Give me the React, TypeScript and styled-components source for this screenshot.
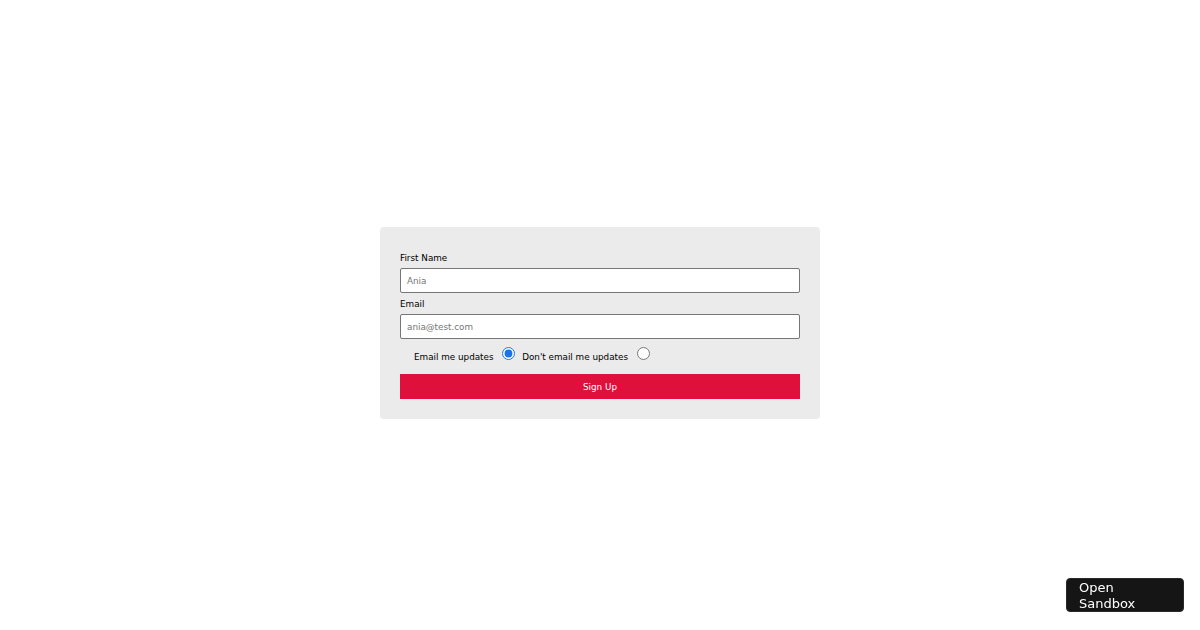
import React from 'react';
import styled, { createGlobalStyle } from 'styled-components';

const GlobalStyle = createGlobalStyle`
  body {
    margin: 0;
    background: #fff;
    font-family: "DejaVu Sans", sans-serif;
  }
`;

const Page = styled.div`
  min-height: 100vh;
  box-sizing: border-box;
  padding-top: 16px;
  display: flex;
  align-items: center;
  justify-content: center;
`;

const Card = styled.form`
  width: 440px;
  box-sizing: border-box;
  padding: 20px;
  background-color: #ebebeb;
  border-radius: 4px;
`;

const FieldLabel = styled.label`
  display: block;
  margin: 6px 0 4px;
  font-size: 8.8px;
  line-height: 11px;
  color: #000;
`;

const TextInput = styled.input`
  display: block;
  width: 100%;
  height: 25px;
  box-sizing: border-box;
  padding: 0 6px;
  border: 1px solid #767676;
  border-radius: 2px;
  background: #fff;
  font-family: "DejaVu Sans", sans-serif;
  font-size: 8.8px;
  outline: none;

  &::placeholder {
    color: #757575;
  }
`;

const RadioRow = styled.div`
  margin: 5px 0 12px;
  padding-left: 14px;
  font-size: 8.8px;
`;

const RadioLabel = styled.label`
  color: #000;
`;

const Radio = styled.input`
  width: 13px;
  height: 13px;
  margin: 3px 4px 0 6px;
  accent-color: #1a73e8;
`;

const SubmitButton = styled.button`
  display: block;
  width: 100%;
  height: 25px;
  border: none;
  background-color: #e0103c;
  color: #fff;
  font-family: "DejaVu Sans", sans-serif;
  font-size: 8.8px;
  cursor: pointer;
`;

const SandboxButton = styled.a`
  position: fixed;
  right: 16px;
  bottom: 18px;
  width: 118px;
  height: 34px;
  box-sizing: border-box;
  padding: 1px 12px 0 12px;
  background-color: #151515;
  border: 1px solid #2a2a2a;
  border-radius: 4px;
  color: #fff;
  font-size: 13px;
  line-height: 16px;
  text-decoration: none;
`;

const App: React.FC = () => {
  return (
    <>
      <GlobalStyle />
      <Page>
        <Card onSubmit={(e) => e.preventDefault()}>
          <FieldLabel htmlFor="firstName">First Name</FieldLabel>
          <TextInput id="firstName" type="text" placeholder="Ania" />
          <FieldLabel htmlFor="email">Email</FieldLabel>
          <TextInput id="email" type="email" placeholder="ania@test.com" />
          <RadioRow>
            <RadioLabel htmlFor="yes">Email me updates</RadioLabel>{' '}
            <Radio id="yes" type="radio" name="updates" defaultChecked />{' '}
            <RadioLabel htmlFor="no">Don't email me updates</RadioLabel>{' '}
            <Radio id="no" type="radio" name="updates" />
          </RadioRow>
          <SubmitButton type="submit">Sign Up</SubmitButton>
        </Card>
      </Page>
      <SandboxButton href="#">Open Sandbox</SandboxButton>
    </>
  );
};

export default App;
